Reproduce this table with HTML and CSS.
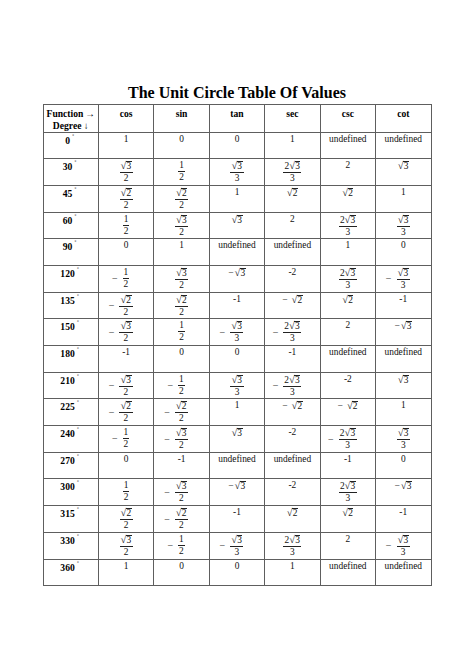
FILE: index.html
```html
<!DOCTYPE html>
<html lang="en">
<head>
<meta charset="utf-8">
<title>The Unit Circle Table Of Values</title>
<link rel="stylesheet" href="styles.css">
</head>
<body>
<div class="page">
  <h1 class="title">The Unit Circle Table Of Values</h1>
  <table class="grid">
    <tr class="head">
      <th class="fn">Function&thinsp;→<br>Degree ↓</th>
      <th>cos</th><th>sin</th><th>tan</th><th>sec</th><th>csc</th><th>cot</th>
    </tr>
    <tr>
      <th class="deg">0<sup>˚</sup></th>
      <td>1</td><td>0</td><td>0</td><td>1</td><td>undefined</td><td>undefined</td>
    </tr>
    <tr>
      <th class="deg">30<sup>˚</sup></th>
      <td><span class="frac"><span class="n"><span class="sq">√</span><span class="ol">3</span></span><span class="d">2</span></span></td>
      <td><span class="frac"><span class="n">1</span><span class="d">2</span></span></td>
      <td><span class="frac"><span class="n"><span class="sq">√</span><span class="ol">3</span></span><span class="d">3</span></span></td>
      <td><span class="frac"><span class="n">2<span class="sq">√</span><span class="ol">3</span></span><span class="d">3</span></span></td>
      <td>2</td>
      <td><span class="sq">√</span><span class="ol">3</span></td>
    </tr>
    <tr>
      <th class="deg">45<sup>˚</sup></th>
      <td><span class="frac"><span class="n"><span class="sq">√</span><span class="ol">2</span></span><span class="d">2</span></span></td>
      <td><span class="frac"><span class="n"><span class="sq">√</span><span class="ol">2</span></span><span class="d">2</span></span></td>
      <td>1</td>
      <td><span class="sq">√</span><span class="ol">2</span></td>
      <td><span class="sq">√</span><span class="ol">2</span></td>
      <td>1</td>
    </tr>
    <tr>
      <th class="deg">60<sup>˚</sup></th>
      <td><span class="frac"><span class="n">1</span><span class="d">2</span></span></td>
      <td><span class="frac"><span class="n"><span class="sq">√</span><span class="ol">3</span></span><span class="d">2</span></span></td>
      <td><span class="sq">√</span><span class="ol">3</span></td>
      <td>2</td>
      <td><span class="frac"><span class="n">2<span class="sq">√</span><span class="ol">3</span></span><span class="d">3</span></span></td>
      <td><span class="frac"><span class="n"><span class="sq">√</span><span class="ol">3</span></span><span class="d">3</span></span></td>
    </tr>
    <tr>
      <th class="deg">90<sup>˚</sup></th>
      <td>0</td><td>1</td><td>undefined</td><td>undefined</td><td>1</td><td>0</td>
    </tr>
    <tr>
      <th class="deg">120<sup>˚</sup></th>
      <td><span class="nf"><span class="neg">−</span><span class="frac"><span class="n">1</span><span class="d">2</span></span></span></td>
      <td><span class="frac"><span class="n"><span class="sq">√</span><span class="ol">3</span></span><span class="d">2</span></span></td>
      <td><span class="nt">−</span><span class="sq">√</span><span class="ol">3</span></td>
      <td>-2</td>
      <td><span class="frac"><span class="n">2<span class="sq">√</span><span class="ol">3</span></span><span class="d">3</span></span></td>
      <td><span class="nf"><span class="neg">−</span><span class="frac"><span class="n"><span class="sq">√</span><span class="ol">3</span></span><span class="d">3</span></span></span></td>
    </tr>
    <tr>
      <th class="deg">135<sup>˚</sup></th>
      <td><span class="nf"><span class="neg">−</span><span class="frac"><span class="n"><span class="sq">√</span><span class="ol">2</span></span><span class="d">2</span></span></span></td>
      <td><span class="frac"><span class="n"><span class="sq">√</span><span class="ol">2</span></span><span class="d">2</span></span></td>
      <td>-1</td>
      <td><span class="nr">−</span><span class="sq">√</span><span class="ol">2</span></td>
      <td><span class="sq">√</span><span class="ol">2</span></td>
      <td>-1</td>
    </tr>
    <tr>
      <th class="deg">150<sup>˚</sup></th>
      <td><span class="nf"><span class="neg">−</span><span class="frac"><span class="n"><span class="sq">√</span><span class="ol">3</span></span><span class="d">2</span></span></span></td>
      <td><span class="frac"><span class="n">1</span><span class="d">2</span></span></td>
      <td><span class="nf"><span class="neg">−</span><span class="frac"><span class="n"><span class="sq">√</span><span class="ol">3</span></span><span class="d">3</span></span></span></td>
      <td><span class="nf"><span class="neg">−</span><span class="frac"><span class="n">2<span class="sq">√</span><span class="ol">3</span></span><span class="d">3</span></span></span></td>
      <td>2</td>
      <td><span class="nt">−</span><span class="sq">√</span><span class="ol">3</span></td>
    </tr>
    <tr>
      <th class="deg">180<sup>˚</sup></th>
      <td>-1</td><td>0</td><td>0</td><td>-1</td><td>undefined</td><td>undefined</td>
    </tr>
    <tr>
      <th class="deg">210<sup>˚</sup></th>
      <td><span class="nf"><span class="neg">−</span><span class="frac"><span class="n"><span class="sq">√</span><span class="ol">3</span></span><span class="d">2</span></span></span></td>
      <td><span class="nf"><span class="neg">−</span><span class="frac"><span class="n">1</span><span class="d">2</span></span></span></td>
      <td><span class="frac"><span class="n"><span class="sq">√</span><span class="ol">3</span></span><span class="d">3</span></span></td>
      <td><span class="nf"><span class="neg">−</span><span class="frac"><span class="n">2<span class="sq">√</span><span class="ol">3</span></span><span class="d">3</span></span></span></td>
      <td>-2</td>
      <td><span class="sq">√</span><span class="ol">3</span></td>
    </tr>
    <tr>
      <th class="deg">225<sup>˚</sup></th>
      <td><span class="nf"><span class="neg">−</span><span class="frac"><span class="n"><span class="sq">√</span><span class="ol">2</span></span><span class="d">2</span></span></span></td>
      <td><span class="nf"><span class="neg">−</span><span class="frac"><span class="n"><span class="sq">√</span><span class="ol">2</span></span><span class="d">2</span></span></span></td>
      <td>1</td>
      <td><span class="nr">−</span><span class="sq">√</span><span class="ol">2</span></td>
      <td><span class="nr">−</span><span class="sq">√</span><span class="ol">2</span></td>
      <td>1</td>
    </tr>
    <tr>
      <th class="deg">240<sup>˚</sup></th>
      <td><span class="nf"><span class="neg">−</span><span class="frac"><span class="n">1</span><span class="d">2</span></span></span></td>
      <td><span class="nf"><span class="neg">−</span><span class="frac"><span class="n"><span class="sq">√</span><span class="ol">3</span></span><span class="d">2</span></span></span></td>
      <td><span class="sq">√</span><span class="ol">3</span></td>
      <td>-2</td>
      <td><span class="nf"><span class="neg">−</span><span class="frac"><span class="n">2<span class="sq">√</span><span class="ol">3</span></span><span class="d">3</span></span></span></td>
      <td><span class="frac"><span class="n"><span class="sq">√</span><span class="ol">3</span></span><span class="d">3</span></span></td>
    </tr>
    <tr>
      <th class="deg">270<sup>˚</sup></th>
      <td>0</td><td>-1</td><td>undefined</td><td>undefined</td><td>-1</td><td>0</td>
    </tr>
    <tr>
      <th class="deg">300<sup>˚</sup></th>
      <td><span class="frac"><span class="n">1</span><span class="d">2</span></span></td>
      <td><span class="nf"><span class="neg">−</span><span class="frac"><span class="n"><span class="sq">√</span><span class="ol">3</span></span><span class="d">2</span></span></span></td>
      <td><span class="nt">−</span><span class="sq">√</span><span class="ol">3</span></td>
      <td>-2</td>
      <td><span class="frac"><span class="n">2<span class="sq">√</span><span class="ol">3</span></span><span class="d">3</span></span></td>
      <td><span class="nt">−</span><span class="sq">√</span><span class="ol">3</span></td>
    </tr>
    <tr>
      <th class="deg">315<sup>˚</sup></th>
      <td><span class="frac"><span class="n"><span class="sq">√</span><span class="ol">2</span></span><span class="d">2</span></span></td>
      <td><span class="nf"><span class="neg">−</span><span class="frac"><span class="n"><span class="sq">√</span><span class="ol">2</span></span><span class="d">2</span></span></span></td>
      <td>-1</td>
      <td><span class="sq">√</span><span class="ol">2</span></td>
      <td><span class="sq">√</span><span class="ol">2</span></td>
      <td>-1</td>
    </tr>
    <tr>
      <th class="deg">330<sup>˚</sup></th>
      <td><span class="frac"><span class="n"><span class="sq">√</span><span class="ol">3</span></span><span class="d">2</span></span></td>
      <td><span class="nf"><span class="neg">−</span><span class="frac"><span class="n">1</span><span class="d">2</span></span></span></td>
      <td><span class="nf"><span class="neg">−</span><span class="frac"><span class="n"><span class="sq">√</span><span class="ol">3</span></span><span class="d">3</span></span></span></td>
      <td><span class="frac"><span class="n">2<span class="sq">√</span><span class="ol">3</span></span><span class="d">3</span></span></td>
      <td>2</td>
      <td><span class="nf"><span class="neg">−</span><span class="frac"><span class="n"><span class="sq">√</span><span class="ol">3</span></span><span class="d">3</span></span></span></td>
    </tr>
    <tr>
      <th class="deg">360<sup>˚</sup></th>
      <td>1</td><td>0</td><td>0</td><td>1</td><td>undefined</td><td>undefined</td>
    </tr>
  </table>
</div>
</body>
</html>
```

FILE: styles.css
```css
html, body {
  margin: 0;
  padding: 0;
  background: #fff;
}

body {
  font-family: "Liberation Serif", "Times New Roman", serif;
  color: #111;
}

.page {
  width: 474px;
  padding-top: 84px;
}

.title {
  margin: 0;
  text-align: center;
  font-size: 16px;
  line-height: 18px;
  font-weight: bold;
  color: #000;
}

.grid {
  margin: 1.5px 0 0 42.5px;
  width: 389px;
  border-collapse: collapse;
  table-layout: fixed;
  border: 1.5px solid #666;
}

.grid tr {
  height: 26.7px;
}

.grid tr.head {
  height: 28px;
}

.grid th,
.grid td {
  border: 1px solid #5e5e5e;
  padding: 1px 0 0;
  vertical-align: top;
  text-align: center;
  font-size: 9.4px;
  line-height: 11px;
  font-weight: normal;
  white-space: nowrap;
}

.grid th {
  font-weight: bold;
  font-size: 9.6px;
  color: #000;
}

.grid tr.head th {
  padding-top: 3px;
  line-height: 12px;
}

.grid th.deg {
  padding-top: 2px;
  padding-right: 2px;
}

.grid th.deg sup {
  font-size: 7px;
  font-weight: normal;
  vertical-align: top;
  line-height: 7px;
  margin-left: 2px;
  position: relative;
  top: -1px;
}

.frac {
  display: inline-flex;
  flex-direction: column;
  align-items: center;
  vertical-align: top;
}

.frac .n {
  border-bottom: 1px solid #222;
  padding: 0 1px;
  line-height: 11px;
}

.frac .d {
  line-height: 11px;
}

.sq {
  font-size: 10.5px;
}

.ol {
  display: inline-block;
  line-height: 9px;
  border-top: 0.8px solid #222;
  margin-left: -0.3px;
  padding: 0 0.5px;
}

.nf {
  display: inline-flex;
  align-items: center;
  padding-right: 11px;
}

.neg {
  margin-right: 5px;
  font-size: 10px;
}

.nt {
  margin-right: 1px;
}

.nr {
  margin-right: 4px;
}
```
